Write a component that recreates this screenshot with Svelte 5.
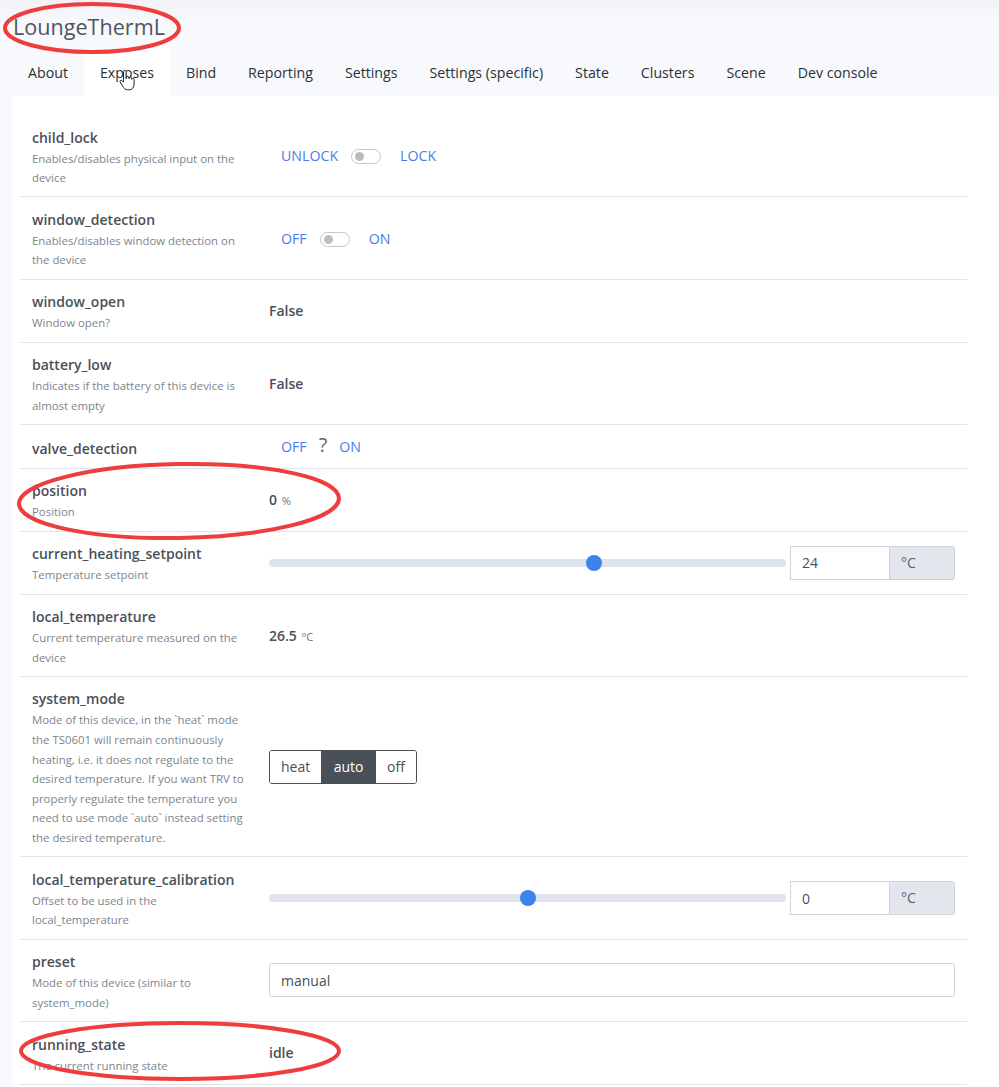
<script lang="ts">
	const tabs = ['About', 'Exposes', 'Bind', 'Reporting', 'Settings', 'Settings (specific)', 'State', 'Clusters', 'Scene', 'Dev console'];

	const rows = [
		{ name: 'child_lock', desc: 'Enables/disables physical input on the device', kind: 'toggle', off: 'UNLOCK', on: 'LOCK' },
		{ name: 'window_detection', desc: 'Enables/disables window detection on the device', kind: 'toggle', off: 'OFF', on: 'ON' },
		{ name: 'window_open', desc: 'Window open?', kind: 'text', value: 'False' },
		{ name: 'battery_low', desc: 'Indicates if the battery of this device is almost empty', kind: 'text', value: 'False' },
		{ name: 'valve_detection', desc: '', kind: 'unknown', off: 'OFF', on: 'ON' },
		{ name: 'position', desc: 'Position', kind: 'text', value: '0', unit: '%' },
		{ name: 'current_heating_setpoint', desc: 'Temperature setpoint', kind: 'range', value: 24, min: 5, max: 35, unit: '°C' },
		{ name: 'local_temperature', desc: 'Current temperature measured on the device', kind: 'text', value: '26.5', unit: '°C' },
		{
			name: 'system_mode',
			desc: 'Mode of this device, in the `heat` mode the TS0601 will remain continuously heating, i.e. it does not regulate to the desired temperature. If you want TRV to properly regulate the temperature you need to use mode `auto` instead setting the desired temperature.',
			kind: 'modes'
		},
		{ name: 'local_temperature_calibration', desc: 'Offset to be used in the local_temperature', kind: 'range', value: 0, min: -9, max: 9, unit: '°C' },
		{ name: 'preset', desc: 'Mode of this device (similar to system_mode)', kind: 'input', value: 'manual' },
		{ name: 'running_state', desc: 'The current running state', kind: 'text', value: 'idle' }
	];

	const modes = ['heat', 'auto', 'off'];
	let mode = $state('auto');
</script>

<div class="page">
	<h1>LoungeThermL</h1>

	<ul class="tabs">
		{#each tabs as tab}
			<li class:active={tab === 'Exposes'}>{tab}</li>
		{/each}
	</ul>

	<div class="card">
		{#each rows as row}
			<div class="row">
				<div class="label">
					<div class="name">{row.name}</div>
					{#if row.desc}<div class="desc">{row.desc}</div>{/if}
				</div>
				<div class="value">
					{#if row.kind === 'toggle'}
						<div class="switch">
							<span class="link">{row.off}</span>
							<span class="toggle"><span></span></span>
							<span class="link">{row.on}</span>
						</div>
					{:else if row.kind === 'unknown'}
						<div class="switch">
							<span class="link">{row.off}</span>
							<span class="question">?</span>
							<span class="link">{row.on}</span>
						</div>
					{:else if row.kind === 'text'}
						<strong>{row.value}</strong>
						{#if row.unit}<small>{row.unit}</small>{/if}
					{:else if row.kind === 'range'}
						<div class="range-row">
							<input type="range" min={row.min} max={row.max} value={row.value} />
							<div class="group">
								<input class="field" type="text" value={row.value} />
								<span class="addon">{row.unit}</span>
							</div>
						</div>
					{:else if row.kind === 'modes'}
						<div class="modes">
							{#each modes as m}
								<button class:on={mode === m} onclick={() => (mode = m)}>{m}</button>
							{/each}
						</div>
					{:else if row.kind === 'input'}
						<input class="field wide" type="text" value={row.value} />
					{/if}
				</div>
			</div>
		{/each}
	</div>

	<!-- annotations drawn over the screenshot -->
	<svg class="marks" width="999" height="1087" viewBox="0 0 999 1087" fill="none">
		<g stroke="#ee3d3d" stroke-width="4">
			<ellipse cx="92" cy="28" rx="87" ry="24" />
			<ellipse cx="179" cy="501" rx="160" ry="37" transform="rotate(-1 179 501)" />
			<ellipse cx="180" cy="1051" rx="159" ry="28" />
		</g>
		<path
			d="M123.5 71.5c0-1.6 2.6-1.6 2.6 0v7.2l.3-1.6c.4-1.3 2.4-1 2.4.4l.2 1.2.3-.8c.5-1.2 2.3-.9 2.3.4l.1 1 .4-.5c.7-.8 2-.3 2 .8v4.4c0 3.200-1.800 5.800-4.800 5.800h-1.700c-2 0-3.300-.9-4.300-2.600l-3.200-5.300c-.7-1.200.9-2.300 1.900-1.300l1.500 1.500z"
			fill="#fff"
			stroke="#222"
			stroke-width="1"
		/>
	</svg>
</div>

<style>
	:global(body) {
		background: #f8f9fc;
	}

	.page {
		position: relative;
		height: 1087px;
		overflow: hidden;
		font-family: 'Open Sans', 'Noto Sans', sans-serif;
		font-size: 14px;
		color: #495057;
		background: linear-gradient(#f1f2f6, #f8f9fc 24px);
	}

	h1 {
		margin: 0;
		padding: 13px 0 0 13px;
		height: 35px;
		font-size: 21.6px;
		line-height: 28px;
		font-weight: 400;
		color: #4d5662;
	}

	.tabs {
		display: flex;
		margin: 0 0 0 12px;
		padding: 0;
		list-style: none;
		height: 48px;
	}

	.tabs li {
		padding: 15px 16px 0;
		font-size: 14.2px;
		line-height: 20px;
		color: #2b3036;
	}

	.tabs li.active {
		background: #fff;
	}

	.card {
		margin-left: 12px;
		padding: 19px 32px 0 8px;
		background: #fff;
		min-height: 1000px;
	}

	.row {
		display: grid;
		grid-template-columns: 237px 1fr;
		align-items: center;
		box-sizing: border-box;
		min-height: 43px;
		padding: 12px;
		border-bottom: 1px solid #dee4ec;
	}

	.label {
		margin: 1.5px 0 -3.3px;
	}

	.name {
		font-size: 14px;
		line-height: 18px;
		font-weight: 600;
		color: #4a5058;
	}

	.desc {
		margin-top: 2px;
		font-size: 11.4px;
		line-height: 19.6px;
		color: #7c858d;
		max-width: 215px;
	}

	.switch {
		display: flex;
		align-items: center;
		gap: 12px;
		padding-left: 12px;
		font-size: 14.2px;
	}

	.link {
		color: #4c7ce6;
	}

	.toggle {
		display: block;
		box-sizing: border-box;
		width: 30px;
		height: 15px;
		margin: 2px 7px 0 1px;
		padding: 2px 3px;
		border: 1px solid #c6c6c6;
		border-radius: 8px;
		background: #fff;
	}

	.toggle span {
		display: block;
		width: 9px;
		height: 9px;
		border-radius: 50%;
		background: #bdbdbd;
	}

	.question {
		font-size: 20px;
		line-height: 18px;
		color: #666;
		margin-top: -3px;
	}

	strong {
		font-weight: 600;
		font-size: 14px;
		color: #4a5058;
	}

	small {
		font-size: 11.2px;
		color: #6c757d;
		margin-left: 1px;
	}

	.range-row {
		display: flex;
		align-items: center;
		gap: 4px;
	}

	input[type='range'] {
		flex: none;
		width: 517px;
		height: 8px;
		margin: 0;
		appearance: none;
		background: #dee4ea;
		border-radius: 4px;
	}

	input[type='range']::-webkit-slider-thumb {
		appearance: none;
		width: 16px;
		height: 16px;
		border: 0;
		border-radius: 50%;
		background: #3e82ee;
	}

	.group {
		display: flex;
		width: 165px;
		height: 34px;
	}

	.field {
		box-sizing: border-box;
		min-width: 0;
		flex: 1;
		padding: 0 11px;
		border: 1px solid #ced4da;
		font: inherit;
		color: #495057;
		background: #fff;
	}

	.field.wide {
		display: block;
		width: 100%;
		height: 34px;
		border-radius: 3px;
	}

	.addon {
		box-sizing: border-box;
		flex: none;
		width: 66px;
		margin-left: -1px;
		padding: 0 11px;
		line-height: 32px;
		border: 1px solid #ced4da;
		border-radius: 0 3px 3px 0;
		background: #e2e6ed;
		color: #5a6570;
	}

	.modes {
		display: inline-flex;
		overflow: hidden;
		height: 34px;
		box-sizing: border-box;
		border: 1px solid #495057;
		border-radius: 3px;
		vertical-align: middle;
	}

	.modes button {
		padding: 0 11px;
		border: 0;
		font: inherit;
		color: #495057;
		background: #fff;
	}

	.modes button.on {
		padding: 0 12.5px;
		background: #495057;
		color: #fff;
	}

	.marks {
		position: absolute;
		inset: 0;
		pointer-events: none;
	}
</style>
